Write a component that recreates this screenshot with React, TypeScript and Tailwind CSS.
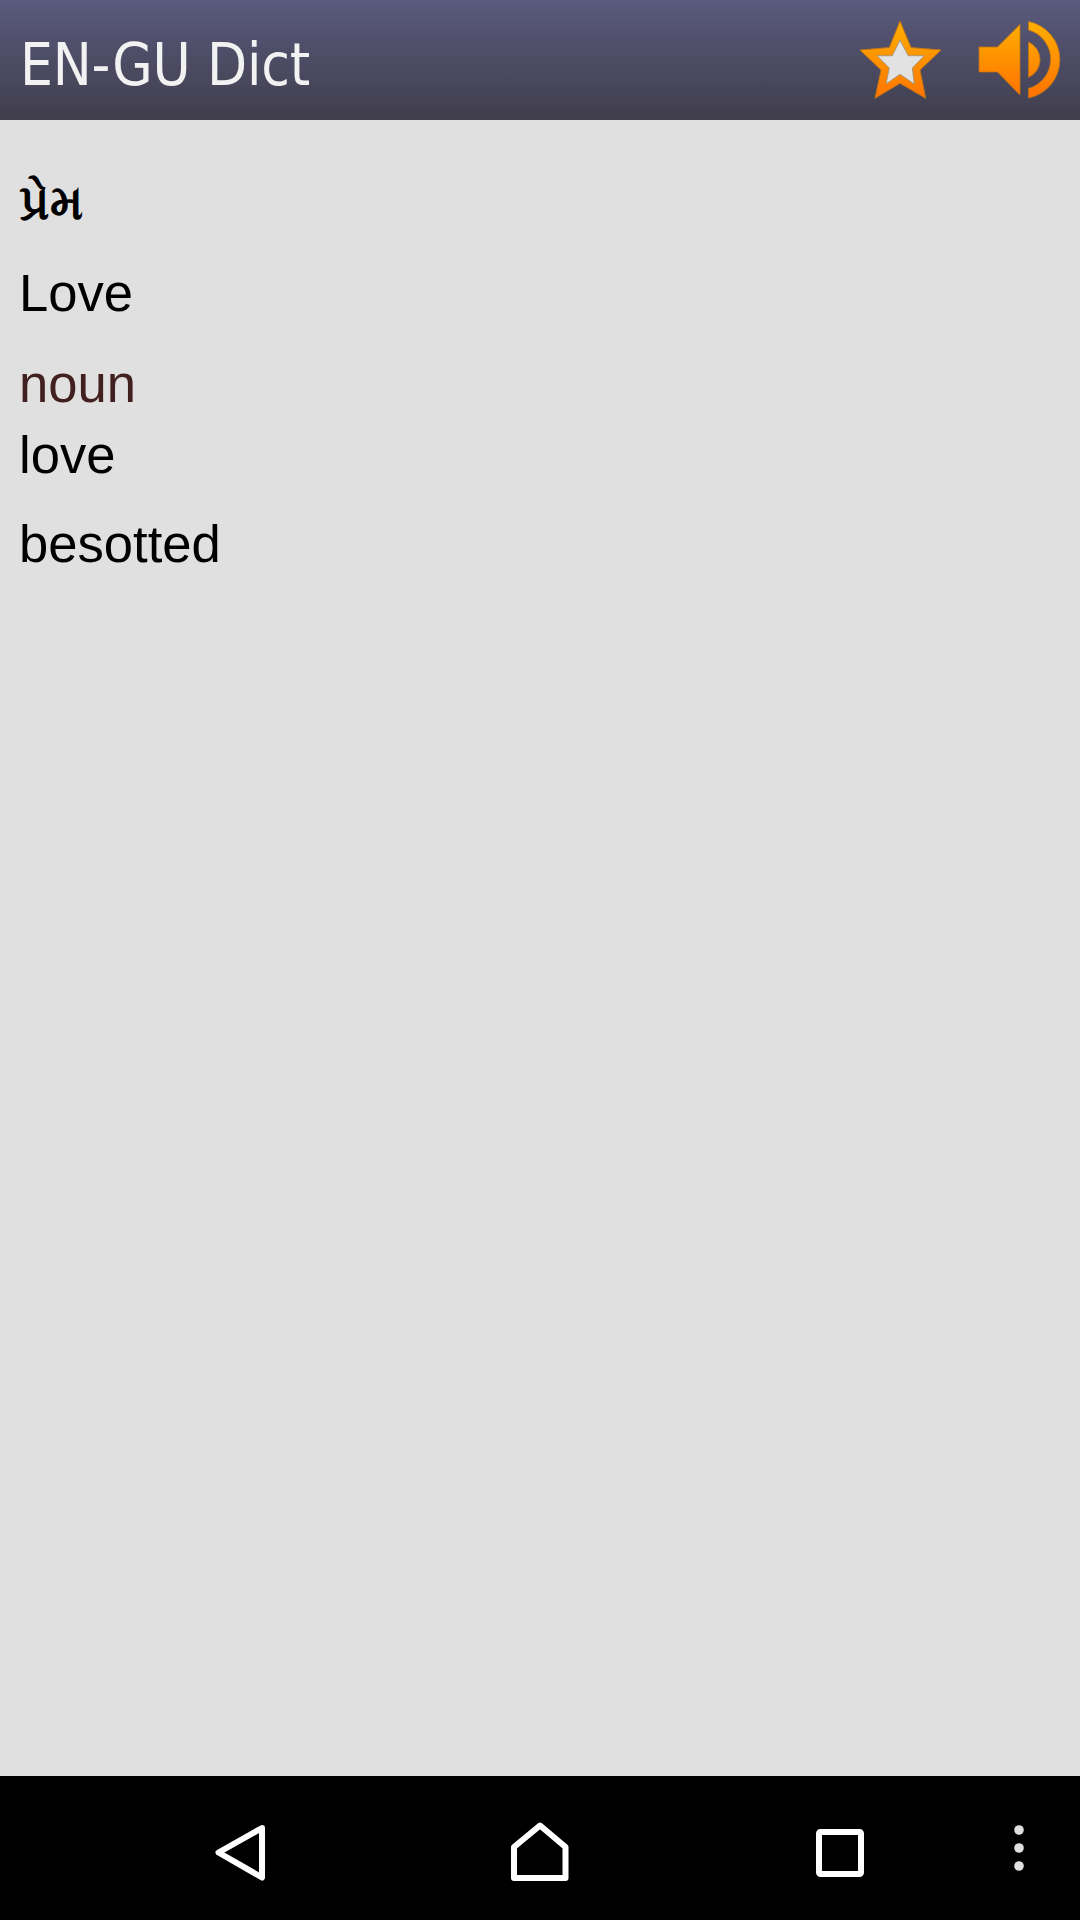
function StarIcon() {
  return (
    <svg className="w-[84px] h-[82px]" viewBox="858 19 84 82">
      <defs>
        <linearGradient id="starFill" x1="0" y1="0" x2="0" y2="1">
          <stop offset="0" stopColor="#ffb000" />
          <stop offset="1" stopColor="#ff7400" />
        </linearGradient>
      </defs>
      <path
        d="M900 21 L911 47.5 L941 50 L920 70 L925.7 98.3 L900 83.3 L875 98.3 L881 70 L860 50 L889.3 47.5 Z"
        fill="url(#starFill)"
        stroke="#bd7418"
        strokeWidth="1"
        strokeLinejoin="round"
      />
      <path
        d="M900 40 L908.3 55.7 L924.3 55.7 L912.3 68 L914.3 84 L900 74.3 L886 84 L889.3 68 L877 55.7 L892.3 55.7 Z"
        fill="#e2e2e2"
        stroke="#a89878"
        strokeWidth="1"
        strokeLinejoin="round"
      />
    </svg>
  );
}

function SpeakerIcon() {
  return (
    <svg className="w-[86px] h-[82px]" viewBox="977 19 86 82">
      <defs>
        <linearGradient id="spkFill" gradientUnits="userSpaceOnUse" x1="0" y1="21" x2="0" y2="99">
          <stop offset="0" stopColor="#ffb000" />
          <stop offset="1" stopColor="#ff7000" />
        </linearGradient>
      </defs>
      <g fill="url(#spkFill)" stroke="#bd7418" strokeWidth="0.8">
        <path d="M979 47 L997.5 47 L1020 24.5 L1020 95 L997.5 72 L979 72 Z" />
        <path d="M1028.5 42 A19.4 19.4 0 0 1 1028.5 77.5 Z" />
        <path d="M1028.5 21.5 A39 39 0 0 1 1028.5 98 L1028.5 88.5 A30.4 30.4 0 0 0 1028.5 30 Z" />
      </g>
    </svg>
  );
}

function NavBar() {
  return (
    <nav className="h-[144px] bg-black shrink-0">
      <svg className="w-full h-full" viewBox="0 1776 1080 144">
        <path d="M262 1828 L218.5 1852.5 L262 1877.5 Z" fill="none" stroke="#fff" strokeWidth="6" strokeLinejoin="round" />
        <path d="M514 1878 L514 1847 L540 1825.5 L565.5 1847 L565.5 1878 Z" fill="none" stroke="#fff" strokeWidth="6" strokeLinejoin="round" />
        <rect x="819" y="1832" width="42" height="42" rx="1.5" fill="none" stroke="#fff" strokeWidth="6" />
        <circle cx="1019" cy="1830" r="4.8" fill="#e0e0e0" />
        <circle cx="1019" cy="1848" r="4.8" fill="#e0e0e0" />
        <circle cx="1019" cy="1866" r="4.8" fill="#e0e0e0" />
      </svg>
    </nav>
  );
}

export default function App() {
  return (
    <div className="w-[1080px] h-[1920px] flex flex-col bg-[#e0e0e0] overflow-hidden">
      <header className="h-[120px] shrink-0 flex items-center justify-between pl-[20px] pr-[17px] bg-gradient-to-b from-[#5a5a7e] to-[#403e4c]">
        <h1 className="pt-[10px] text-[58px] leading-[110px] text-[#f2f2f2] font-['DejaVu_Sans_Condensed','DejaVu_Sans',sans-serif] tracking-[-0.2px]">
          EN-GU Dict
        </h1>
        <div className="flex items-center gap-[35px]">
          <StarIcon />
          <SpeakerIcon />
        </div>
      </header>
      <main className="flex-1 px-[19px] pt-[47px] text-black text-[52.6px] leading-[71px] font-['Liberation_Sans',Arial,sans-serif]">
        <p className="font-bold text-[47px] mb-[19px]">પ્રેમ</p>
        <p className="mb-[20px]">Love</p>
        <p className="text-[#42201f]">noun</p>
        <p className="mb-[18px]">love</p>
        <p>besotted</p>
      </main>
      <NavBar />
    </div>
  );
}
